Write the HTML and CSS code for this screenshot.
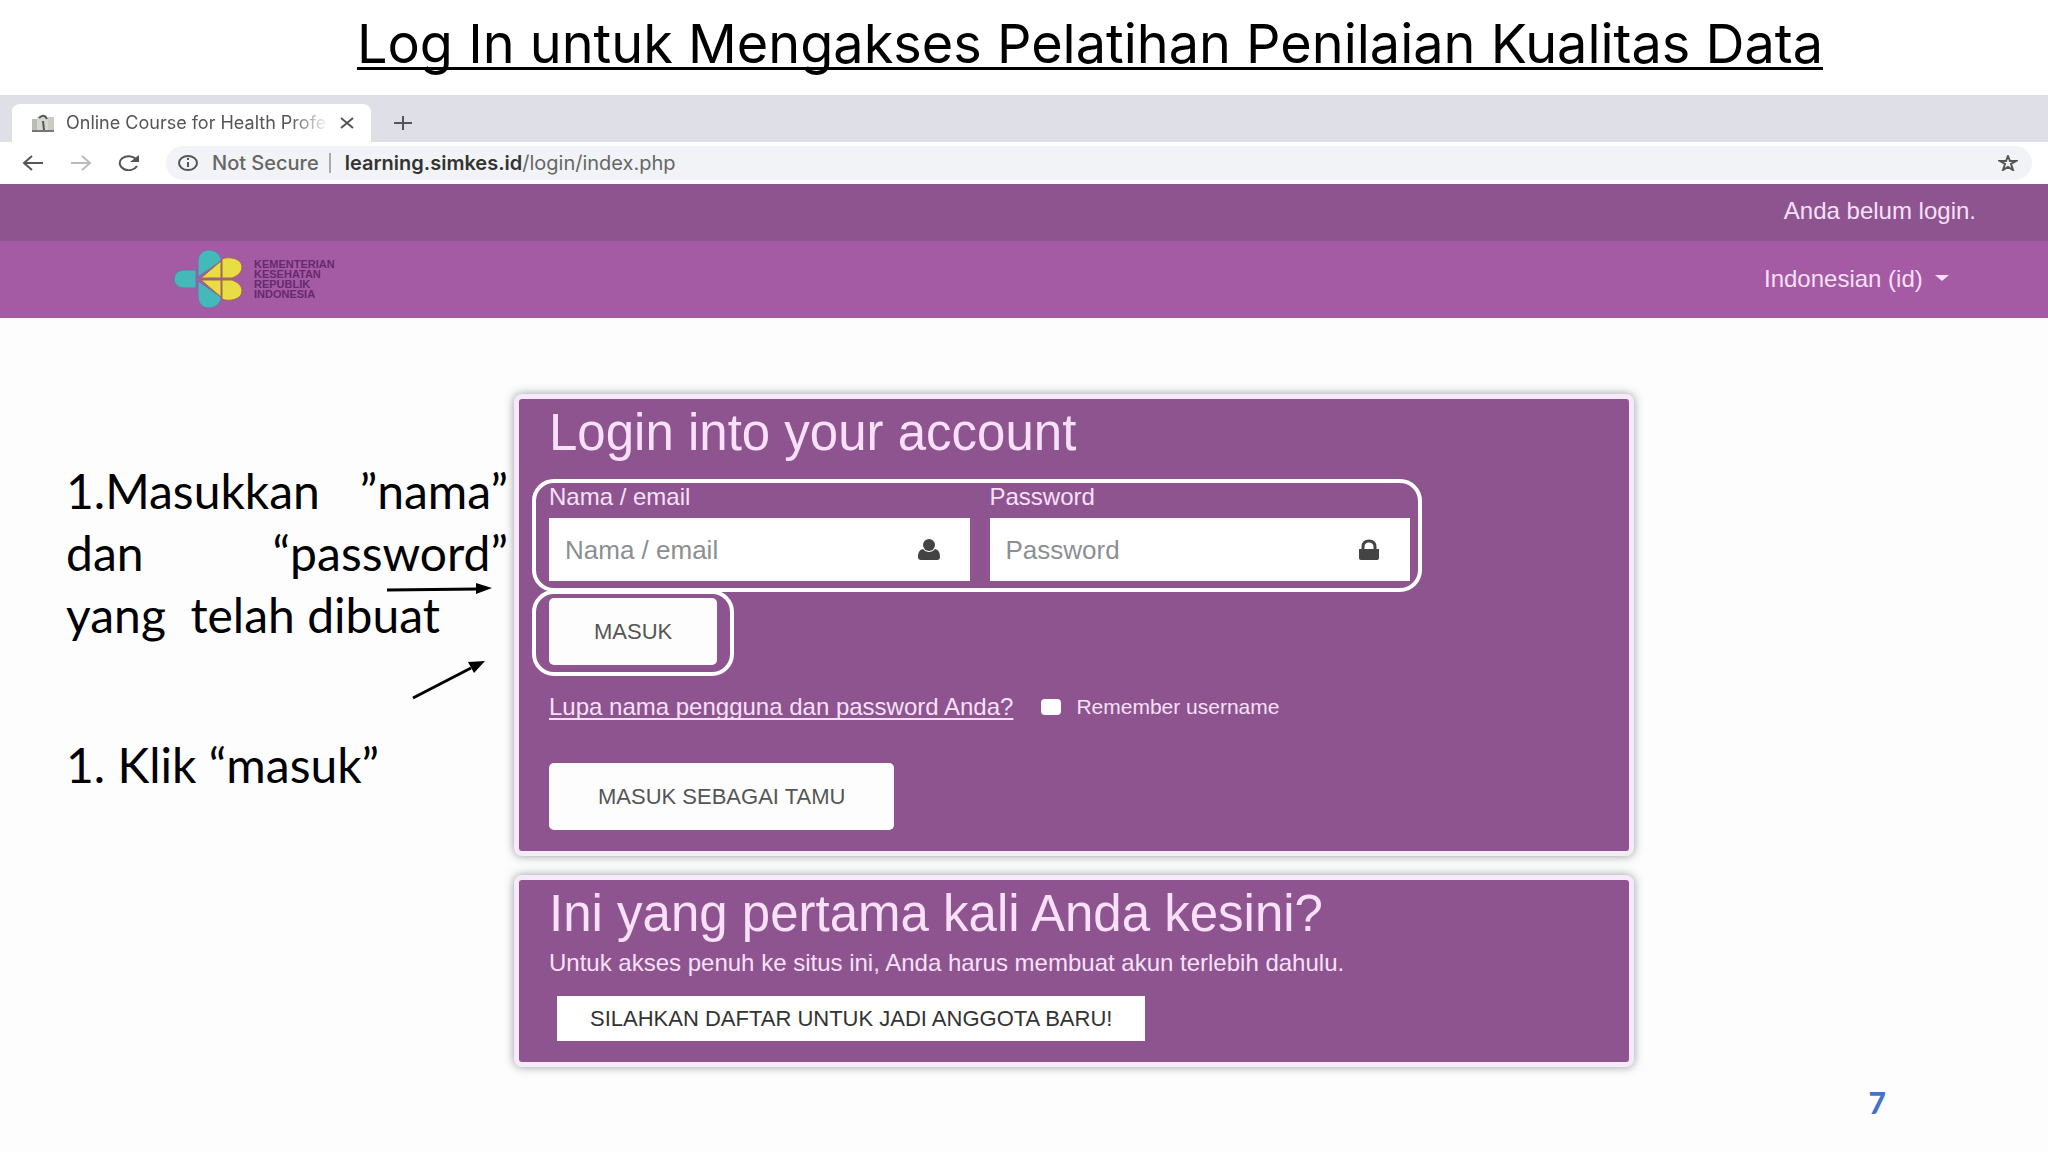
FILE: index.html
```html
<!DOCTYPE html>
<html lang="id">
  <head>
    <meta charset="UTF-8" />
    <meta name="viewport" content="width=device-width, initial-scale=1.0" />
    <title>Log In untuk Mengakses Pelatihan</title>
    <link rel="stylesheet" href="styles.css">
  </head>
  <body>
    <h1 class="slide-title">Log In untuk Mengakses Pelatihan Penilaian Kualitas Data</h1>

    <!-- Browser -->
    <div class="tab-strip">
      <div class="tab">
        <svg class="favicon" viewBox="0 0 24 18">
          <path d="M1 5h6v12H1z" fill="#b9bdb4" />
          <path d="M6 3l8-2 3 3v13H6z" fill="#d5d8d0" />
          <path d="M8 4q5-5 8 1M12 7l1 9" fill="none" stroke="#555" stroke-width="2" />
          <path d="M17 3h6v14h-6z" fill="#c9ccc3" />
          <path d="M1 17h22" stroke="#777" stroke-width="2" />
        </svg>
        <span class="tab-title">Online Course for Health Profe</span>
        <button class="icon-btn" aria-label="Close tab">
          <svg width="14" height="12" viewBox="0 0 14 12"><path d="M1 1l12 10M13 1L1 11" /></svg>
        </button>
      </div>
      <button class="icon-btn new-tab" aria-label="New tab">
        <svg width="18" height="14" viewBox="0 0 18 14"><path d="M9 0v14M0 7h18" /></svg>
      </button>
    </div>
    <div class="toolbar">
      <button class="icon-btn" aria-label="Back">
        <svg width="22" height="16" viewBox="0 0 22 16"><path d="M21 8H2M10 1L2 8l8 7" /></svg>
      </button>
      <button class="icon-btn muted" aria-label="Forward">
        <svg width="22" height="16" viewBox="0 0 22 16"><path d="M1 8h19M12 1l8 7-8 7" /></svg>
      </button>
      <button class="icon-btn" aria-label="Reload">
        <svg width="22" height="16" viewBox="0 0 22 16">
          <path d="M18 4a9 7 0 1 0 1 7" />
          <path d="M21 0v7h-9z" fill="#555" stroke="none" />
        </svg>
      </button>
      <div class="address-bar">
        <svg width="20" height="16" viewBox="0 0 20 16">
          <ellipse cx="10" cy="8" rx="9" ry="7" />
          <path d="M10 7v5M10 3v2" />
        </svg>
        <span class="not-secure">Not Secure</span>
        <span class="url"><b>learning.simkes.id</b>/login/index.php</span>
        <button class="icon-btn star" aria-label="Bookmark">
          <svg width="20" height="16" viewBox="0 0 20 16">
            <path d="M10 1l2 5h6l-5 3 2 6-5-3-5 3 2-6-5-3h6z" />
          </svg>
        </button>
      </div>
    </div>

    <!-- Site header -->
    <div class="user-bar">Anda belum login.</div>
    <header class="site-header">
      <a class="brand" href="#">
        <svg width="72" height="60" viewBox="0 0 72 60">
          <g fill="#45b8b9" stroke="#7a6bb0" stroke-width="1">
            <path d="M24 21H11a9 9 0 0 0 0 18h13z" />
            <path d="M26 28V13C26 5 31 1 37 1s12 4 12 11z" />
            <path d="M26 32v15c0 8 5 12 11 12s12-4 12-11z" />
          </g>
          <g fill="#e9dd45" stroke="#a0684e" stroke-width="1">
            <path d="M29 29l20-17v17z" />
            <path d="M29 31l20 17V31z" />
            <path d="M50 29V10c6-3 20-1 20 8 0 6-5 9-10 11z" />
            <path d="M50 31v19c6 3 20 1 20-8 0-6-5-9-10-11z" />
          </g>
        </svg>
        <span class="brand-name">KEMENTERIAN<br>KESEHATAN<br>REPUBLIK<br>INDONESIA</span>
      </a>
      <select class="lang" aria-label="Bahasa">
        <option>Indonesian (id)</option>
      </select>
    </header>

    <main class="content">
      <section class="notes">
        <p class="note">1.Masukkan ”nama” dan “password” yang&nbsp;&nbsp;telah dibuat</p>
        <p class="note">1. Klik “masuk”</p>
        <svg class="arrows" width="110" height="114" viewBox="0 0 110 114">
          <path d="M1 4l92-1M27 112l58-30" stroke="#000" stroke-width="3" />
          <path d="M90-3l16 5-16 6zM82 76l17-1-11 12z" />
        </svg>
      </section>

      <div class="cards">
        <form class="card login-card">
          <h2>Login into your account</h2>
          <div class="fields marked">
            <div class="field">
              <label for="username">Nama / email</label>
              <div class="input-box">
                <input type="text" id="username" placeholder="Nama / email" />
                <svg width="22" height="22" viewBox="0 0 22 22">
                  <ellipse cx="11" cy="6" rx="6" ry="6" />
                  <path d="M5 10c3 4 9 4 12 0 4 1 5 4 5 8q0 3-3 3H3q-3 0-3-3c0-4 1-7 5-8z" />
                </svg>
              </div>
            </div>
            <div class="field">
              <label for="password">Password</label>
              <div class="input-box">
                <input type="password" id="password" placeholder="Password" />
                <svg width="22" height="22" viewBox="0 0 22 22">
                  <path d="M1 10h20v9q0 2-2 2H3q-2 0-2-2z" />
                  <path d="M5 11V8q0-6 6-6t6 6v3" fill="none" stroke="#444" stroke-width="3" />
                </svg>
              </div>
            </div>
          </div>
          <div class="submit marked">
            <button type="submit" class="btn">MASUK</button>
          </div>
          <div class="options">
            <a href="#">Lupa nama pengguna dan password Anda?</a>
            <label class="remember"><input type="checkbox" />Remember username</label>
          </div>
          <button type="button" class="btn btn-guest">MASUK SEBAGAI TAMU</button>
        </form>

        <section class="card">
          <h2>Ini yang pertama kali Anda kesini?</h2>
          <p class="intro">Untuk akses penuh ke situs ini, Anda harus membuat akun terlebih dahulu.</p>
          <button type="button" class="register">SILAHKAN DAFTAR UNTUK JADI ANGGOTA BARU!</button>
        </section>
      </div>
    </main>

    <footer class="page-number">7</footer>
  </body>
</html>
```
FILE: styles.css
```css
* {
  margin: 0;
  padding: 0;
  box-sizing: border-box;
}

body {
  background-color: #fdfdfd;
  color: #000;
  font-family: "Liberation Sans", Arial, sans-serif;
  font-size: 24px;
  line-height: 28px;
}

button,
input,
select {
  font: inherit;
  border: none;
}

.slide-title {
  padding: 8px 0 15px 132px;
  background-color: #fff;
  font-family: Inter, sans-serif;
  font-size: 54px;
  font-weight: 400;
  line-height: 72px;
  text-align: center;
  text-decoration: underline;
  text-decoration-thickness: 3px;
  text-decoration-skip-ink: none;
  text-underline-offset: 4px;
}

/* Browser */
.tab-strip {
  display: flex;
  align-items: flex-end;
  height: 47px;
  padding-left: 12px;
  background-color: #dfe0e7;
}

.tab {
  display: flex;
  align-items: center;
  gap: 11px;
  width: 359px;
  height: 38px;
  padding: 0 17px 0 19px;
  background-color: #fff;
  border-radius: 8px 8px 0 0;
}

.favicon {
  width: 24px;
  height: 18px;
}

.tab-title {
  flex: 1;
  overflow: hidden;
  font-family: Inter, sans-serif;
  font-size: 18px;
  white-space: nowrap;
  color: #555;
  -webkit-mask-image: linear-gradient(90deg, #000 85%, transparent);
  mask-image: linear-gradient(90deg, #000 85%, transparent);
}

.icon-btn {
  display: flex;
  background: none;
}

.icon-btn svg,
.address-bar svg {
  fill: none;
  stroke: #555;
  stroke-width: 2;
}

.icon-btn.muted svg {
  stroke: #bbb;
}

.new-tab {
  padding: 12px 23px;
}

.toolbar {
  display: flex;
  align-items: center;
  gap: 26px;
  height: 42px;
  padding: 0 16px 0 22px;
  background-color: #fff;
}

.address-bar {
  display: flex;
  flex: 1;
  align-items: center;
  gap: 14px;
  height: 34px;
  padding: 0 14px 0 12px;
  border-radius: 17px;
  background-color: #f1f3f6;
  font-family: Inter, sans-serif;
  font-size: 20px;
  color: #666;
}

.not-secure {
  padding-right: 10px;
  border-right: 2px solid #aaa;
  font-weight: 500;
  line-height: 20px;
}

.url b {
  font-weight: 600;
  color: #333;
}

.star {
  margin-left: auto;
}

/* Site header */
.user-bar {
  padding: 13px 72px 16px;
  background-color: #8d5490;
  color: #f8e0f8;
  text-align: right;
}

.site-header {
  display: flex;
  justify-content: space-between;
  align-items: center;
  height: 77px;
  padding: 0 99px 2px 172px;
  background-color: #a55aa4;
}

.brand {
  display: flex;
  align-items: center;
  gap: 10px;
  text-decoration: none;
}

.brand-name {
  font-size: 11px;
  font-weight: bold;
  line-height: 10px;
  color: #642a6c;
}

.lang {
  padding-right: 26px;
  appearance: none;
  background: url("data:image/svg+xml,%3Csvg xmlns='http://www.w3.org/2000/svg' width='14' height='7'%3E%3Cpath d='M0 0h14L7 6z' fill='%23f8e0f8'/%3E%3C/svg%3E") no-repeat right center;
  color: #f8e0f8;
}

/* Content */
.content {
  display: grid;
  grid-template-columns: 514fr 1120fr 414fr;
  padding-top: 76px;
}

.notes {
  position: relative;
  padding: 66px 6px 0 66px;
}

.note {
  margin-bottom: 88px;
  font-family: Lato, sans-serif;
  font-size: 48px;
  line-height: 62px;
  text-align: justify;
}

.arrows {
  position: absolute;
  top: 192px;
  right: 18px;
  overflow: visible;
}

.cards {
  display: grid;
  gap: 19px;
}

.card {
  padding: 2px 30px 21px;
  border: 5px solid #f6eaf8;
  border-radius: 8px;
  background-color: #8d5490;
  box-shadow: 0 0 10px rgba(40, 60, 60, 0.5);
  color: #f8e0f8;
}

.card h2 {
  font-size: 51px;
  font-weight: 400;
  line-height: 64px;
}

/* Form */
.marked {
  position: relative;
}

.marked::after {
  content: "";
  position: absolute;
  inset: -8px -12px -11px -17px;
  border: 4px solid #fff;
  border-radius: 22px;
  pointer-events: none;
}

.fields {
  display: grid;
  grid-template-columns: 1fr 1fr;
  gap: 20px;
  width: 82%;
  margin-top: 18px;
}

.field label {
  display: block;
  margin-bottom: 7px;
}

.fields::after {
  inset: -4px -12px -11px -17px;
}

.input-box {
  display: flex;
  align-items: center;
  height: 63px;
  padding: 0 30px 0 16px;
  background-color: #fff;
}

.input-box input {
  flex: 1;
  min-width: 0;
  background: none;
  font-size: 26px;
  outline: none;
}

.input-box input::placeholder {
  color: #8b8f92;
}

.input-box svg {
  fill: #444;
}

.submit {
  width: fit-content;
  margin-top: 17px;
}

.submit::after {
  inset: -8px -17px -11px -17px;
}

.btn {
  display: block;
  padding: 20px 45px 19px;
  border-radius: 5px;
  background-color: #fdfdfd;
  color: #555;
  font-size: 22px;
}

.btn-guest {
  padding: 20px 49px 19px;
}

.options {
  display: flex;
  align-items: center;
  gap: 28px;
  margin: 28px 0 42px;
}

.options a {
  color: inherit;
  text-underline-offset: 3px;
  text-decoration-skip-ink: none;
}

.remember {
  display: flex;
  align-items: center;
  gap: 15px;
  font-size: 21px;
}

.remember input {
  appearance: none;
  width: 20px;
  height: 16px;
  border-radius: 4px;
  background-color: #fff;
}

.intro {
  margin: 3px 0 19px;
}

.register {
  margin-left: 8px;
  padding: 9px 33px 8px;
  background-color: #fff;
  color: #333;
  font-size: 22px;
}

.page-number {
  margin-top: 15px;
  padding-right: 162px;
  font-family: Lato, sans-serif;
  font-size: 30px;
  font-weight: 900;
  line-height: 40px;
  text-align: right;
  color: #4472c4;
}
```
